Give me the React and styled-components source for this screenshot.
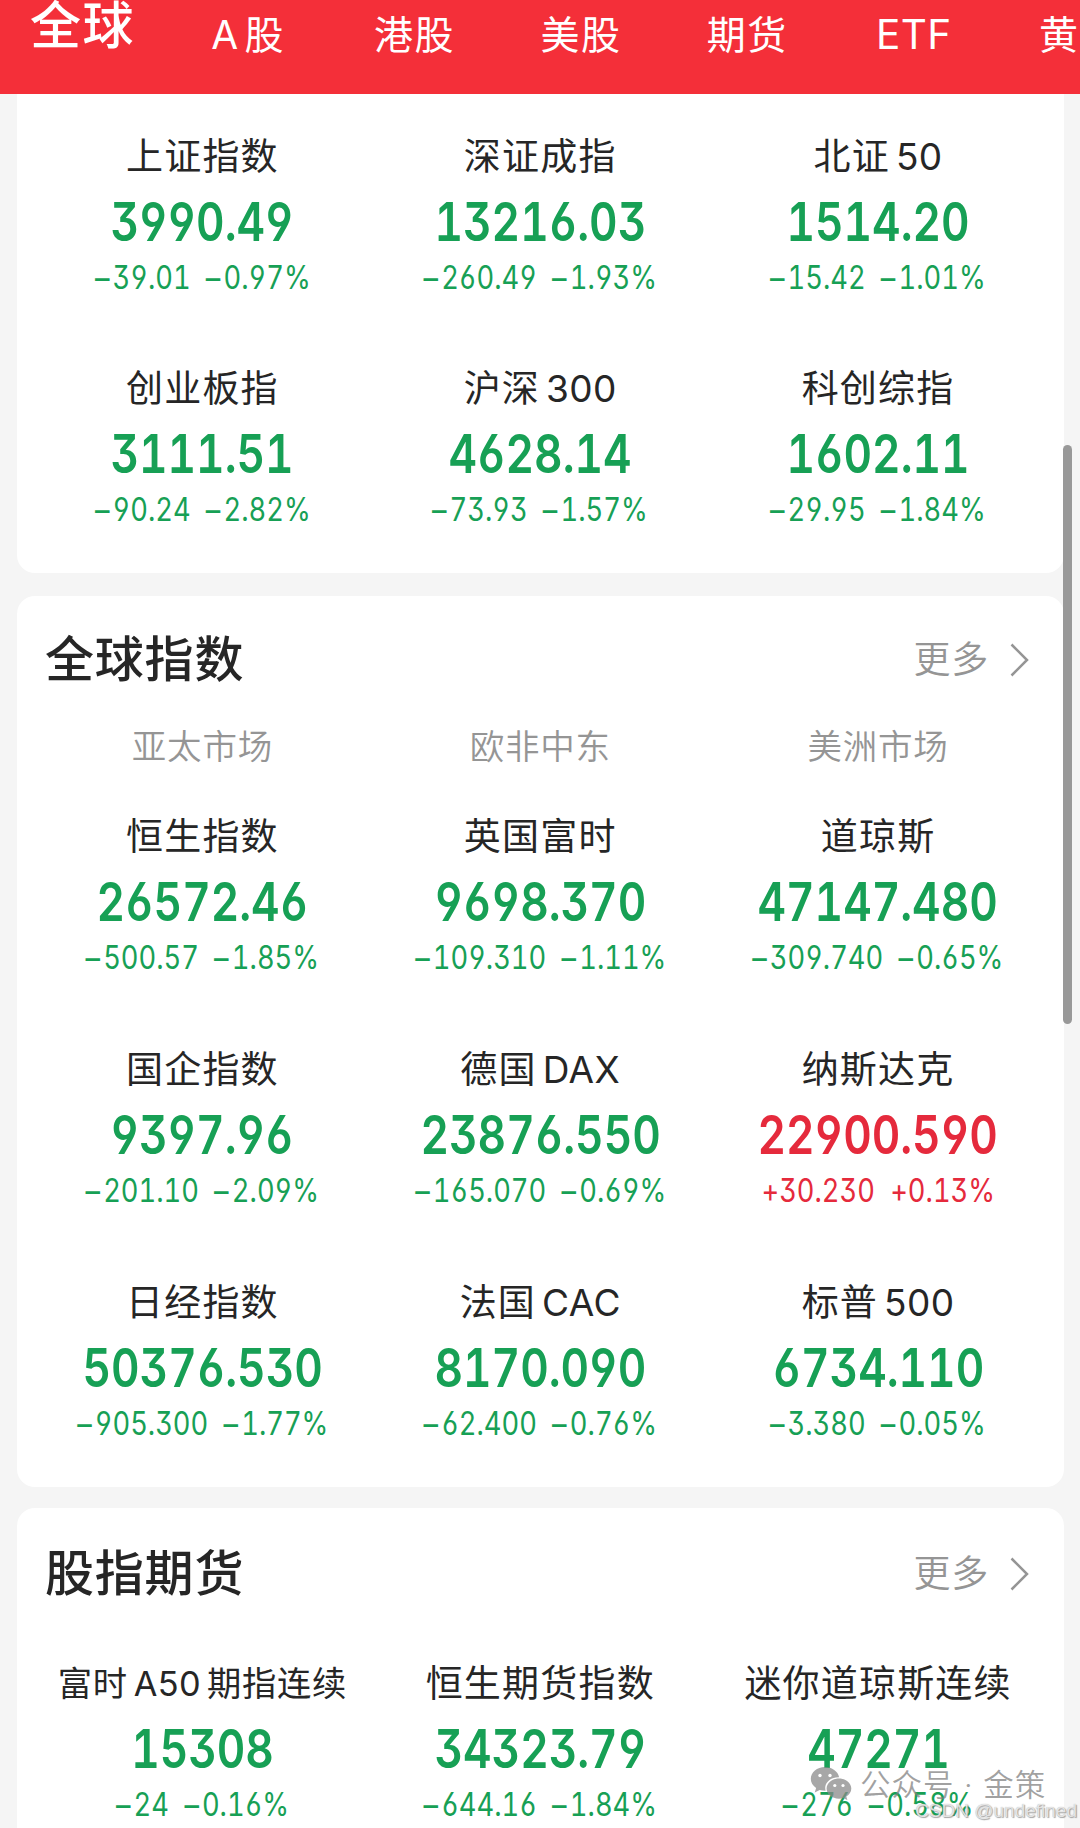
import React from 'react';
import styled, { createGlobalStyle } from 'styled-components';

const GlobalStyle = createGlobalStyle`
  * { box-sizing: border-box; }
  body {
    margin: 0;
    background: #f5f5f5;
    font-family: Inter, 'Noto Sans CJK SC', sans-serif;
    color: #262626;
  }
`;

const Screen = styled.div`
  position: relative;
  width: 1080px;
  height: 1828px;
  overflow: hidden;
  background: #f5f5f5;
`;

const TabBar = styled.nav`
  display: flex;
  height: 94px;
  background: #f42f39;
  color: #fff;
  overflow: hidden;
`;

const Tab = styled.div`
  flex: none;
  width: ${(p) => (p.$last ? 'auto' : p.$active ? '165px' : '166.4px')};
  padding-left: ${(p) => (p.$last ? '42px' : '0')};
  height: ${(p) => (p.$active ? '52px' : '69px')};
  line-height: ${(p) => (p.$active ? '52px' : '69px')};
  font-size: ${(p) => (p.$active ? '51px' : p.$latin ? '40.5px' : '39px')};
  font-weight: ${(p) => (p.$active ? 500 : 400)};
  letter-spacing: ${(p) => (p.$latin ? '0.3px' : '1.5px')};
  text-align: center;
  white-space: nowrap;
`;

const Sections = styled.main`
  display: flex;
  flex-direction: column;
  padding: 0 16.5px 0 17px;
`;

const Card = styled.section`
  background: #fff;
  border-radius: ${(p) => (p.$attached ? '0 0 18px 18px' : '18px')};
  margin-bottom: ${(p) => p.$gap || 0}px;
  padding: ${(p) => p.$top}px 16.5px ${(p) => p.$bottom}px;
`;

const CardHeader = styled.header`
  display: flex;
  align-items: center;
  justify-content: space-between;
  height: 72px;
  padding: 0 18px 0 11.5px;
`;

const Title = styled.h2`
  margin: 0;
  font-size: 49px;
  line-height: 72px;
  font-weight: 500;
  letter-spacing: 0.8px;
`;

const More = styled.a`
  display: flex;
  align-items: center;
  gap: 21px;
  font-size: 37px;
  line-height: 56px;
  font-weight: 350;
  letter-spacing: 0.8px;
  color: #959595;
`;

const Grid = styled.div`
  display: grid;
  grid-template-columns: repeat(3, 1fr);
  row-gap: 67.6px;
  margin-top: ${(p) => p.$offset || 0}px;
`;

const Regions = styled.div`
  display: grid;
  grid-template-columns: repeat(3, 1fr);
  margin-top: 26px;
`;

const Region = styled.div`
  text-align: center;
  font-size: 34.5px;
  line-height: 50px;
  letter-spacing: 0.8px;
  font-weight: 350;
  color: #959595;
`;

const Quote = styled.article`
  display: flex;
  flex-direction: column;
  align-items: center;
  white-space: nowrap;
  color: ${(p) => (p.$up ? '#e52a3c' : '#17a055')};
`;

const Name = styled.div`
  height: 52px;
  line-height: 52px;
  font-size: ${(p) => (p.$small ? 34.3 : 37)}px;
  letter-spacing: ${(p) => (p.$small ? 0.7 : 1.2)}px;
  font-weight: 400;
  color: #262626;
`;

const Latin = styled.span`
  letter-spacing: 0.4px;
  margin-left: ${(p) => (p.$leading ? 0 : 6)}px;
  margin-right: ${(p) => (p.$inner ? 6 : 0)}px;
`;

const Figure = styled.div`
  font-feature-settings: 'tnum', 'cv03', 'cv04', 'cv09';
`;

const Price = styled(Figure)`
  margin-top: 8px;
  font-size: 53.5px;
  line-height: 62px;
  font-weight: 600;
  transform: scaleX(0.825);
`;

const Change = styled(Figure)`
  display: flex;
  gap: 18px;
  margin-top: 7px;
  font-size: 32.3px;
  line-height: 36px;
  font-weight: 400;
  transform: scaleX(0.845);
`;

const Sign = styled.span`
  display: inline-block;
  transform: scaleX(${(p) => (p.$plus ? 1 : 1.16)});
  transform-origin: right center;
`;

const ScrollThumb = styled.div`
  position: absolute;
  top: 445px;
  right: 8px;
  width: 9px;
  height: 579px;
  border-radius: 5px;
  background: #999;
`;

const AccountMark = styled.div`
  position: absolute;
  left: 810px;
  top: 1762px;
  display: flex;
  align-items: center;
  gap: 8px;
  height: 42px;
  font-size: 30.5px;
  font-weight: 350;
  letter-spacing: 1px;
  white-space: pre;
  color: rgba(125, 125, 125, 0.72);
`;

const SiteMark = styled.div`
  position: absolute;
  right: 3px;
  bottom: 5px;
  font-family: 'Liberation Sans', sans-serif;
  font-size: 19px;
  line-height: 24px;
  color: rgba(240, 240, 240, 0.85);
  text-shadow: 1px 1px 1px rgba(120, 120, 120, 0.65), 0 0 1px rgba(140, 140, 140, 0.7);
`;

const tabs = ['全球', 'A股', '港股', '美股', '期货', 'ETF', '黄'];

const domestic = [
  ['上证指数', '3990.49', '−39.01', '−0.97%'],
  ['深证成指', '13216.03', '−260.49', '−1.93%'],
  ['北证50', '1514.20', '−15.42', '−1.01%'],
  ['创业板指', '3111.51', '−90.24', '−2.82%'],
  ['沪深300', '4628.14', '−73.93', '−1.57%'],
  ['科创综指', '1602.11', '−29.95', '−1.84%'],
];

const world = [
  ['恒生指数', '26572.46', '−500.57', '−1.85%'],
  ['英国富时', '9698.370', '−109.310', '−1.11%'],
  ['道琼斯', '47147.480', '−309.740', '−0.65%'],
  ['国企指数', '9397.96', '−201.10', '−2.09%'],
  ['德国DAX', '23876.550', '−165.070', '−0.69%'],
  ['纳斯达克', '22900.590', '+30.230', '+0.13%'],
  ['日经指数', '50376.530', '−905.300', '−1.77%'],
  ['法国CAC', '8170.090', '−62.400', '−0.76%'],
  ['标普500', '6734.110', '−3.380', '−0.05%'],
];

const futures = [
  ['富时A50期指连续', '15308', '−24', '−0.16%'],
  ['恒生期货指数', '34323.79', '−644.16', '−1.84%'],
  ['迷你道琼斯连续', '47271', '−276', '−0.58%'],
];

function spaced(name) {
  const parts = name.split(/([A-Za-z0-9]+)/).filter(Boolean);
  if (parts.length === 1) return name;
  return parts.map((part, i) =>
    /^[A-Za-z0-9]/.test(part) ? (
      <Latin key={i} $leading={i === 0} $inner={i < parts.length - 1}>{part}</Latin>
    ) : (
      part
    )
  );
}

function Signed({ value }) {
  return (
    <span>
      <Sign $plus={value[0] === '+'}>{value[0]}</Sign>
      {value.slice(1)}
    </span>
  );
}

function QuoteGrid({ items, offset }) {
  return (
    <Grid $offset={offset}>
      {items.map(([name, price, change, percent]) => (
        <Quote key={name} $up={change.startsWith('+')}>
          <Name $small={name.length > 8}>{spaced(name)}</Name>
          <Price>{price}</Price>
          <Change>
            <Signed value={change} />
            <Signed value={percent} />
          </Change>
        </Quote>
      ))}
    </Grid>
  );
}

function SectionHeader({ title }) {
  return (
    <CardHeader>
      <Title>{title}</Title>
      <More>
        更多
        <svg width="19" height="34" viewBox="0 0 19 34" fill="none" stroke="#959595" strokeWidth="2.500">
          <path d="M1.500 1.500 17 17 1.500 32.500" />
        </svg>
      </More>
    </CardHeader>
  );
}

function ChatBubbles() {
  return (
    <svg width="42" height="34" viewBox="0 0 42 34">
      <path
        fill="#8a8a8a"
        fillOpacity="0.75"
        d="M15 1C7 1 .8 6.200.8 12.800c0 3.800 2 7 5.300 9.200L4.700 26.500l5-2.600c1.700.5 3.400.8 5.300.8h.6a10 10 0 0 1-.4-2.600c0-6.200 6-10.900 13.200-10.900h.7C28 5.300 22 1 15 1Z"
      />
      <path
        fill="#8a8a8a"
        fillOpacity="0.75"
        d="M29 12.500c-7 0-12.400 4.500-12.400 10.100S22 32.700 29 32.700c1.500 0 2.900-.2 4.200-.6l4.200 2-1.100-3.500c3-1.900 5-4.700 5-8 0-5.600-5.400-10.100-12.300-10.100Z"
      />
      <g fill="#fff">
        <circle cx="10" cy="9.500" r="1.700" />
        <circle cx="20" cy="9.500" r="1.700" />
        <circle cx="24.800" cy="19.500" r="1.600" />
        <circle cx="33" cy="19.500" r="1.600" />
      </g>
    </svg>
  );
}

export default function App() {
  return (
    <Screen>
      <GlobalStyle />
      <TabBar>
        {tabs.map((label, i) => (
          <Tab key={label} $active={i === 0} $last={i === tabs.length - 1} $latin={label === 'ETF'}>
            {spaced(label)}
          </Tab>
        ))}
      </TabBar>
      <Sections>
        <Card $attached $top={36.7} $bottom={44.7} $gap={23.3}>
          <QuoteGrid items={domestic} />
        </Card>
        <Card $top={28.1} $bottom={45.4} $gap={21}>
          <SectionHeader title="全球指数" />
          <Regions>
            <Region>亚太市场</Region>
            <Region>欧非中东</Region>
            <Region>美洲市场</Region>
          </Regions>
          <QuoteGrid items={world} offset={39} />
        </Card>
        <Card $top={29.6} $bottom={30}>
          <SectionHeader title="股指期货" />
          <QuoteGrid items={futures} offset={48.7} />
        </Card>
      </Sections>
      <ScrollThumb />
      <AccountMark>
        <ChatBubbles />
        <span>公众号 · 金策</span>
      </AccountMark>
      <SiteMark>CSDN @undefined</SiteMark>
    </Screen>
  );
}
